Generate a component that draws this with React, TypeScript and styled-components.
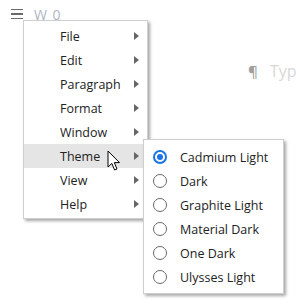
import React from 'react'
import styled, { createGlobalStyle } from 'styled-components'

const GlobalStyle = createGlobalStyle`
  html, body {
    margin: 0;
    padding: 0;
    background: #ffffff;
    overflow: hidden;
  }
  body {
    font-family: 'Segoe UI', 'Open Sans', 'Noto Sans', sans-serif;
  }
`

const Page = styled.div`
  position: relative;
  width: 296px;
  height: 307px;
  background: #fff;
  overflow: hidden;
`

const TopBar = styled.div`
  display: flex;
  align-items: center;
  gap: 11px;
  height: 28px;
  padding: 0 0 0 11px;
`

const Burger = styled.div`
  display: flex;
  flex-direction: column;
  gap: 3px;
  width: 12px;

  span {
    display: block;
    height: 1.5px;
    background: #6a6a6a;
  }
`

const WordCount = styled.div`
  font-size: 14px;
  color: #b0b6c4;
  letter-spacing: 1px;
`

const Editor = styled.div`
  display: flex;
  align-items: center;
  gap: 12px;
  width: 48px;
  padding: 32px 0 0 248px;
  font-size: 16px;
  white-space: nowrap;
  overflow: hidden;
`

const Pilcrow = styled.span`
  color: #a0a0a0;
  font-weight: 600;
  font-size: 15px;
`

const Placeholder = styled.span`
  color: #d8d8d8;
`

const Menu = styled.div<{ $top: number; $left: number; $width: number; $pad: string }>`
  position: absolute;
  top: ${({ $top }) => $top}px;
  left: ${({ $left }) => $left}px;
  width: ${({ $width }) => $width}px;
  box-sizing: border-box;
  display: flex;
  flex-direction: column;
  padding: ${({ $pad }) => $pad};
  background: #fff;
  border: 1px solid #cfcfcf;
  box-shadow: 2px 2px 3px rgba(0, 0, 0, 0.35);
  z-index: 2;
`

const Item = styled.div<{ $active?: boolean }>`
  position: relative;
  display: flex;
  align-items: center;
  height: 24px;
  padding-left: 36px;
  font-size: 12.5px;
  color: #222;
  background: ${({ $active }) => ($active ? '#e5e5e5' : 'transparent')};
`

const Arrow = styled.span`
  position: absolute;
  right: 8px;
  top: 8px;
  width: 0;
  height: 0;
  border-top: 4px solid transparent;
  border-bottom: 4px solid transparent;
  border-left: 5px solid #666;
`

const RadioItem = styled.div`
  display: flex;
  align-items: center;
  gap: 13px;
  height: 24px;
  padding-left: 9px;
  font-size: 12.5px;
  color: #222;
`

const Radio = styled.span<{ $checked?: boolean }>`
  position: relative;
  width: 14px;
  height: 14px;
  box-sizing: border-box;
  border-radius: 50%;
  border: ${({ $checked }) => ($checked ? '2px solid #1a73e8' : '1.5px solid #6a6a6a')};
  flex-shrink: 0;

  &::after {
    content: '';
    display: ${({ $checked }) => ($checked ? 'block' : 'none')};
    position: absolute;
    top: 2px;
    left: 2px;
    width: 6px;
    height: 6px;
    border-radius: 50%;
    background: #1a73e8;
  }
`

const Cursor = styled.svg`
  position: absolute;
  left: 107px;
  top: 150px;
  z-index: 3;
`

const menuItems = ['File', 'Edit', 'Paragraph', 'Format', 'Window', 'Theme', 'View', 'Help']
const themes = ['Cadmium Light', 'Dark', 'Graphite Light', 'Material Dark', 'One Dark', 'Ulysses Light']

export default function App() {
  return (
    <Page>
      <GlobalStyle />
      <TopBar>
        <Burger>
          <span />
          <span />
          <span />
        </Burger>
        <WordCount>W 0</WordCount>
      </TopBar>
      <Editor>
        <Pilcrow>¶</Pilcrow>
        <Placeholder>Typ</Placeholder>
      </Editor>

      <Menu $top={20} $left={23} $width={125} $pad="3px 0 2px">
        {menuItems.map((label) => (
          <Item key={label} $active={label === 'Theme'}>
            {label}
            <Arrow />
          </Item>
        ))}
      </Menu>

      <Menu $top={139} $left={143} $width={141} $pad="5px 0 4px">
        {themes.map((t, i) => (
          <RadioItem key={t}>
            <Radio $checked={i === 0} />
            {t}
          </RadioItem>
        ))}
      </Menu>

      <Cursor width="14" height="22" viewBox="0 0 14 22">
        <path
          d="M1 1 L1 17 L4.8 13.4 L7.6 20 L10 19 L7.3 12.6 L12.5 12.6 Z"
          fill="#fff"
          stroke="#000"
          strokeWidth="1"
        />
      </Cursor>
    </Page>
  )
}
